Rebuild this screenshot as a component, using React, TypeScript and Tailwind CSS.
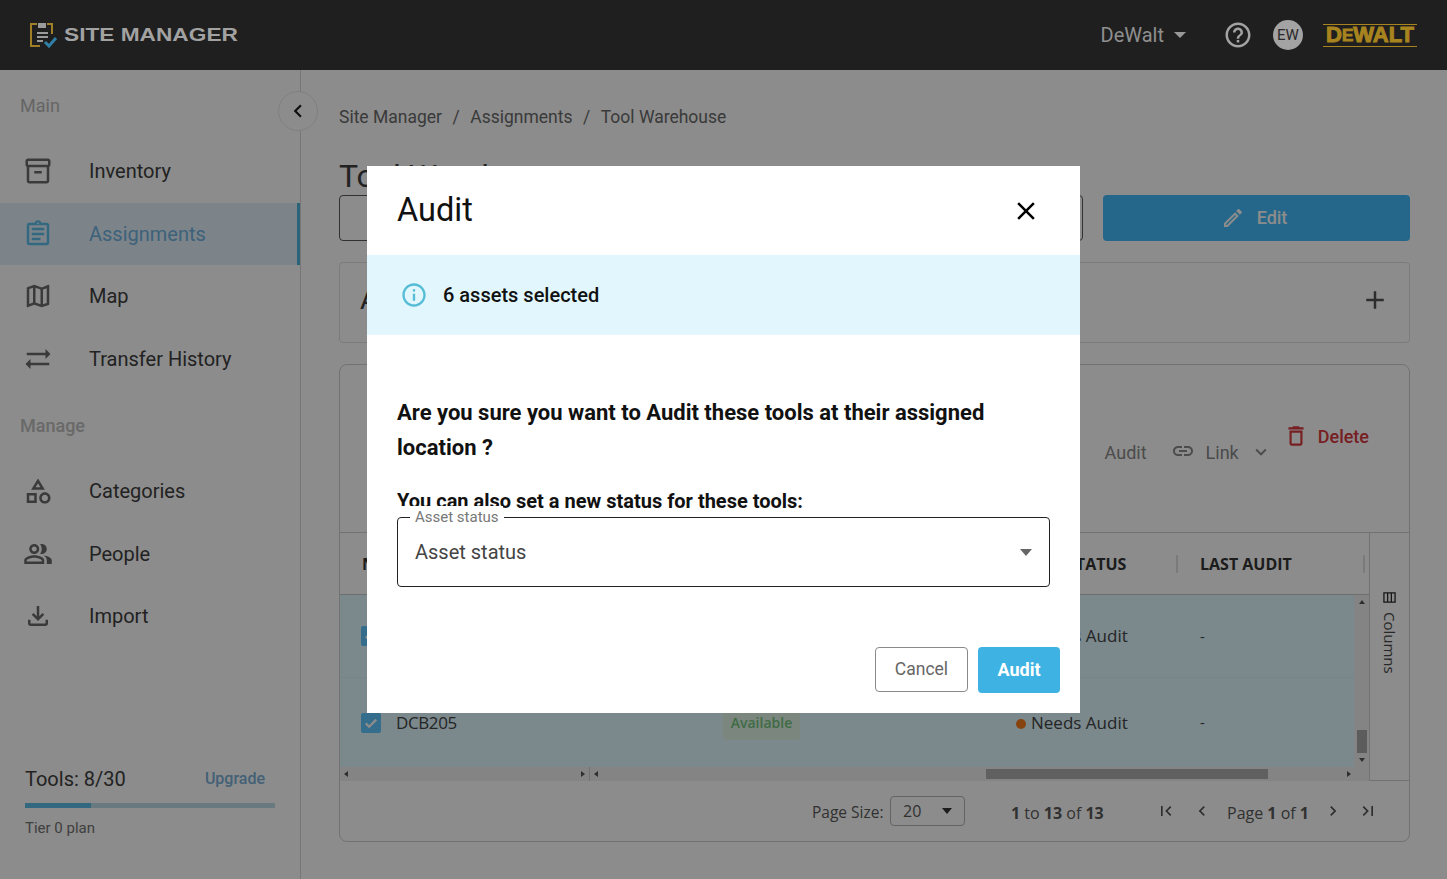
import React from "react";

const paths = {
  inventory: "M20 2H4c-1 0-2 .9-2 2v3.01c0 .72.43 1.34 1 1.69V20c0 1.1 1.1 2 2 2h14c.9 0 2-.9 2-2V8.7c.57-.35 1-.97 1-1.69V4c0-1.1-1-2-2-2zm-1 18H5V9h14v11zm1-13H4V4h16v3zM9 12h6v2H9z",
  assignment: "M7 15h7v2H7zm0-4h10v2H7zm0-4h10v2H7zm12-4h-4.18C14.4 1.84 13.3 1 12 1c-1.3 0-2.4.84-2.82 2H5c-.14 0-.27.01-.4.04-.39.08-.74.28-1.01.55-.18.18-.33.4-.43.64-.1.23-.16.49-.16.77v14c0 .27.06.54.16.78s.25.45.43.64c.27.27.62.47 1.01.55.13.02.26.03.4.03h14c1.1 0 2-.9 2-2V5c0-1.1-.9-2-2-2zm-7-.25c.41 0 .75.34.75.75s-.34.75-.75.75-.75-.34-.75-.75.34-.75.75-.75zM19 19H5V5h14v14z",
  map: "M20.5 3l-.16.03L15 5.1 9 3 3.36 4.9c-.21.07-.36.25-.36.48V20.5c0 .28.22.5.5.5l.16-.03L9 18.9l6 2.1 5.64-1.9c.21-.07.36-.25.36-.48V3.5c0-.28-.22-.5-.5-.5zM10 5.47l4 1.4v11.66l-4-1.4V5.47zm-5 .99l3-1.01v11.7l-3 1.16V6.46zm14 11.08l-3 1.01V6.86l3-1.16v11.84z",
  transfer: "M22 8l-4-4v3H3v2h15v3l4-4zM2 16l4 4v-3h15v-2H6v-3l-4 4z",
  category: "M12 2l-5.5 9h11L12 2zm0 3.84L13.93 9h-3.87L12 5.84zM17.5 13c-2.49 0-4.5 2.01-4.5 4.5s2.01 4.5 4.5 4.5 4.5-2.01 4.5-4.5-2.01-4.5-4.5-4.5zm0 7c-1.38 0-2.5-1.12-2.5-2.5s1.12-2.5 2.5-2.5 2.5 1.12 2.5 2.5-1.12 2.5-2.5 2.5zM3 21.5h8v-8H3v8zm2-6h4v4H5v-4z",
  people: "M16.67 13.13C18.04 14.06 19 15.32 19 17v3h4v-3c0-2.18-3.57-3.47-6.33-3.87zM15 12c2.21 0 4-1.79 4-4s-1.79-4-4-4c-.47 0-.91.1-1.33.24C14.5 5.27 15 6.58 15 8s-.5 2.73-1.33 3.76c.42.14.86.24 1.33.24zM9 12c2.21 0 4-1.79 4-4s-1.79-4-4-4-4 1.79-4 4 1.79 4 4 4zm0-6c1.1 0 2 .9 2 2s-.9 2-2 2-2-.9-2-2 .9-2 2-2zM9 13c-2.67 0-8 1.34-8 4v3h16v-3c0-2.66-5.33-4-8-4zm6 5H3v-.99C3.2 16.29 6.3 15 9 15s5.8 1.29 6 2v1z",
  download: "M18 15v3H6v-3H4v3c0 1.1.9 2 2 2h12c1.1 0 2-.9 2-2v-3h-2zm-1-4l-1.41-1.41L13 12.17V4h-2v8.17L8.41 9.59 7 11l5 5 5-5z",
  help: "M11 18h2v-2h-2v2zm1-16C6.48 2 2 6.48 2 12s4.48 10 10 10 10-4.48 10-10S17.52 2 12 2zm0 18c-4.41 0-8-3.59-8-8s3.59-8 8-8 8 3.59 8 8-3.59 8-8 8zm0-14c-2.21 0-4 1.79-4 4h2c0-1.1.9-2 2-2s2 .9 2 2c0 2-3 1.75-3 5h2c0-2.25 3-2.5 3-5 0-2.21-1.79-4-4-4z",
  info: "M11 7h2v2h-2zm0 4h2v6h-2zm1-9C6.48 2 2 6.48 2 12s4.48 10 10 10 10-4.48 10-10S17.52 2 12 2zm0 18c-4.41 0-8-3.59-8-8s3.59-8 8-8 8 3.59 8 8-3.59 8-8 8z",
  close: "M19 6.41 17.59 5 12 10.59 6.41 5 5 6.41 10.59 12 5 17.59 6.41 19 12 13.41 17.59 19 19 17.59 13.41 12z",
  edit: "M3 17.25V21h3.75L17.81 9.94l-3.75-3.75L3 17.25zM5.92 19H5v-.92l9.06-9.06.92.92L5.92 19zM20.71 5.63l-2.34-2.34c-.2-.2-.45-.29-.71-.29s-.51.1-.7.29l-1.83 1.83 3.75 3.75 1.83-1.83c.39-.39.39-1.02 0-1.41z",
  trash: "M16 9v10H8V9h8m-1.5-6h-5l-1 1H5v2h14V4h-3.5l-1-1zM18 7H6v12c0 1.1.9 2 2 2h8c1.1 0 2-.9 2-2V7z",
  link: "M3.9 12c0-1.71 1.39-3.1 3.1-3.1h4V7H7c-2.76 0-5 2.24-5 5s2.24 5 5 5h4v-1.9H7c-1.71 0-3.1-1.39-3.1-3.1zM8 13h8v-2H8v2zm9-6h-4v1.9h4c1.71 0 3.1 1.39 3.1 3.1s-1.39 3.1-3.1 3.1h-4V17h4c2.76 0 5-2.24 5-5s-2.24-5-5-5z",
  plus: "M19 13h-6v6h-2v-6H5v-2h6V5h2v6h6v2z",
  chevronLeft: "M15.41 7.41 14 6l-6 6 6 6 1.41-1.41L10.83 12z",
  chevronRight: "M8.59 16.59 10 18l6-6-6-6-1.41 1.41L13.17 12z",
  chevronDown: "M7.41 8.59 12 13.17l4.59-4.58L18 10l-6 6-6-6z",
  first: "M18.41 16.59 13.82 12l4.59-4.59L17 6l-6 6 6 6zM6 6h2v12H6z",
  last: "M5.59 7.41 10.18 12l-4.59 4.59L7 18l6-6-6-6zM16 6h2v12h-2z",
};

function Icon({ d, className }: { d: string; className?: string }) {
  return (
    <svg viewBox="0 0 24 24" fill="currentColor" className={className}>
      <path d={d} />
    </svg>
  );
}

const mainNav = [
  { label: "Inventory", icon: paths.inventory },
  { label: "Assignments", icon: paths.assignment, active: true },
  { label: "Map", icon: paths.map },
  { label: "Transfer History", icon: paths.transfer },
];

const manageNav = [
  { label: "Categories", icon: paths.category },
  { label: "People", icon: paths.people },
  { label: "Import", icon: paths.download },
];

function NavItem({ label, icon, active }: { label: string; icon: string; active?: boolean }) {
  return (
    <div
      className={`flex h-[62.5px] items-center pl-[23px] text-[20px] ${
        active ? "border-r-[3px] border-[#4fb5e0] bg-[#e2f1fb] text-[#6fb2de]" : "text-[#3e3e3e]"
      }`}
    >
      <Icon d={icon} className={`h-[30px] w-[30px] ${active ? "text-[#5cc0ea]" : "text-[#6a6a6a]"}`} />
      <span className="ml-[36px]">{label}</span>
    </div>
  );
}

function Sidebar() {
  return (
    <aside className="flex w-[301px] shrink-0 flex-col border-r border-[#d8d8d8]">
      <div className="pl-[20px] pt-[24px] text-[18px] leading-[24px] text-[#b9b9b9]">Main</div>
      <nav className="mt-[22px]">
        {mainNav.map((item) => (
          <NavItem key={item.label} {...item} />
        ))}
      </nav>
      <div className="pl-[20px] pt-[24px] text-[18px] font-medium leading-[24px] text-[#c0c0c0]">Manage</div>
      <nav className="mt-[22px]">
        {manageNav.map((item) => (
          <NavItem key={item.label} {...item} />
        ))}
      </nav>
      <div className="mt-auto px-[25px] pb-[41px]">
        <div className="flex items-center justify-between pr-[10px]">
          <span className="text-[20px] leading-[24px] text-[#3e3e3e]">Tools: 8/30</span>
          <span className="text-[16px] font-medium text-[#7ab0d8]">Upgrade</span>
        </div>
        <div className="mt-[12px] h-[5px] w-[250px] bg-[#c0dcea]">
          <div className="h-full w-[66px] bg-[#5cc0ea]" />
        </div>
        <div className="mt-[10px] text-[15px] leading-[20px] text-[#747474]">Tier 0 plan</div>
      </div>
    </aside>
  );
}

function Header() {
  return (
    <header className="relative z-20 flex h-[70px] shrink-0 items-center bg-[#1f1f1f] pl-[30px] pr-[30px]">
      <svg viewBox="0 0 28 26" className="h-[26px] w-[28px]">
        <path d="M7 2H1v22h9M17 2h5v10" fill="none" stroke="#a07f26" strokeWidth="2" />
        <path d="M8 1h8v5H8zM7 10h11v2H7zM7 14h11v2H7zM7 18h6v2H7z" fill="#9b9b9b" />
        <path d="M15 20l4 4 7-8" fill="none" stroke="#2f7fa6" strokeWidth="3" />
      </svg>
      <span className="ml-[6px] inline-block w-[174px] origin-left scale-x-[1.26] whitespace-nowrap font-['Liberation_Sans',sans-serif] text-[18px] font-bold leading-none text-[#a2a2a2]">
        SITE MANAGER
      </span>
      <div className="ml-auto flex items-center">
        <span className="text-[20px] text-[#8f8f8f]">DeWalt</span>
        <span className="ml-[10px] h-0 w-0 border-x-[6px] border-t-[6px] border-x-transparent border-t-[#999999]" />
        <Icon d={paths.help} className="ml-[37px] h-[30px] w-[30px] text-[#a3a3a3]" />
        <span className="ml-[20px] flex h-[30px] w-[30px] items-center justify-center rounded-full bg-[#a3a3a3] text-[15px] text-[#2a2a2a]">
          EW
        </span>
        <span className="ml-[20px] flex h-[23px] w-[94px] items-center justify-center overflow-hidden border-y border-[#a8841f] font-['Liberation_Sans',sans-serif] text-[22px] font-bold leading-none text-[#a8841f] [-webkit-text-stroke:1px_#a8841f]">
          D<span className="text-[17px]">E</span>WALT
        </span>
      </div>
    </header>
  );
}

function Checkbox() {
  return (
    <span className="flex h-[20px] w-[20px] items-center justify-center rounded-[2px] bg-[#62c8ff]">
      <svg viewBox="0 0 24 24" className="h-[18px] w-[18px]" fill="none" stroke="#ffffff" strokeWidth="3">
        <path d="M5 12.5l4.5 4.5L19 7.5" />
      </svg>
    </span>
  );
}

function TableRow({ tall }: { tall?: boolean }) {
  return (
    <div className={`flex items-center font-['Open_Sans',sans-serif] text-[#444444] ${tall ? "h-[89px]" : "h-[83px] border-b border-[#d8f2f8]"}`}>
      <div className="flex w-[250px] items-center pl-[21px]">
        <Checkbox />
        <span className="ml-[15px] text-[17px] tracking-[-0.4px]">DCB205</span>
      </div>
      <div className="w-[133px]" />
      <div className="w-[293px]">
        <span className="inline-flex h-[35px] w-[77px] items-center justify-center rounded-[3px] bg-[#dff5e6] text-[14px] font-semibold text-[#74c47e]">
          Available
        </span>
      </div>
      <div className="flex w-[184px] items-center text-[17px]">
        <span className="mr-[5px] mt-[2px] h-[10px] w-[10px] rounded-full bg-[#f57c20]" />
        Needs Audit
      </div>
      <div className="text-[15px]">-</div>
    </div>
  );
}

function ScrollArrow({ dir }: { dir: "left" | "right" | "up" | "down" }) {
  const cls = {
    left: "border-y-[3px] border-r-[4px] border-y-transparent border-r-[#555555]",
    right: "border-y-[3px] border-l-[4px] border-y-transparent border-l-[#555555]",
    up: "border-x-[3px] border-b-[4px] border-x-transparent border-b-[#555555]",
    down: "border-x-[3px] border-t-[4px] border-x-transparent border-t-[#555555]",
  }[dir];
  return <span className={`h-0 w-0 ${cls}`} />;
}

function Table() {
  return (
    <div className="flex h-[248px] border-b border-[#d0d0d0]">
      <div className="flex w-[1030px] flex-col border-r border-[#cfcfcf]">
        <div className="flex h-[62px] shrink-0 items-center border-b border-[#c8c8c8] font-['Open_Sans',sans-serif] text-[16px] font-bold text-[#333333]">
          <span className="w-[250px] pl-[22px]">NAME</span>
          <span className="w-[133px]" />
          <span className="w-[293px]">STATUS</span>
          <span className="w-[160px] whitespace-nowrap">ASSET STATUS</span>
          <span className="h-[18px] w-[2px] bg-[#e0e0e0]" />
          <span className="w-[185px] pl-[22px]">LAST AUDIT</span>
          <span className="h-[18px] w-[2px] bg-[#e0e0e0]" />
        </div>
        <div className="flex h-[172px] shrink-0">
          <div className="flex-1 bg-[#e0f8ff]">
            <TableRow />
            <TableRow tall />
          </div>
          <div className="flex w-[15px] flex-col items-center justify-between bg-[#f1f1f1] py-[5px]">
            <ScrollArrow dir="up" />
            <span className="mb-[5px] mt-auto h-[23px] w-[10px] bg-[#a8a8a8]" />
            <ScrollArrow dir="down" />
          </div>
        </div>
        <div className="flex h-[14px] shrink-0 bg-[#f1f1f1]">
          <div className="flex w-[250px] items-center justify-between border-r border-[#cfcfcf] px-[4px]">
            <ScrollArrow dir="left" />
            <ScrollArrow dir="right" />
          </div>
          <div className="flex w-[765px] items-center px-[4px]">
            <ScrollArrow dir="left" />
            <span className="ml-[388px] h-[10px] w-[282px] bg-[#b0b0b0]" />
            <span className="flex-1" />
            <ScrollArrow dir="right" />
          </div>
        </div>
      </div>
      <div className="flex flex-1 flex-col items-center pt-[58px] font-['Open_Sans',sans-serif]">
        <svg viewBox="0 0 14 14" className="h-[13px] w-[13px] text-[#2a2a2a]" fill="none" stroke="currentColor" strokeWidth="1.4">
          <path d="M1 2h12v10H1zM5 2v10M9 2v10" />
        </svg>
        <span className="mt-[8px] text-[15px] leading-[20px] text-[#4a4a4a] [writing-mode:vertical-rl]">Columns</span>
      </div>
    </div>
  );
}

function Pager() {
  return (
    <div className="flex h-[60px] items-center pt-[3px] font-['Open_Sans',sans-serif] text-[16px] text-[#5a5a5a]">
      <span className="ml-[472px] w-[71px] whitespace-nowrap text-[15.5px]">Page Size:</span>
      <span className="-mt-[3px] ml-[7px] flex h-[30px] w-[75px] items-center justify-between rounded-[4px] border border-[#b4b4b4] px-[12px] text-[16px]">
        20
        <span className="h-0 w-0 border-x-[5px] border-t-[6px] border-x-transparent border-t-[#333333]" />
      </span>
      <span className="ml-[46px] w-[93px] whitespace-nowrap">
        <b>1</b> to <b>13</b> of <b>13</b>
      </span>
      <Icon d={paths.first} className="-mt-[3px] ml-[52px] h-[20px] w-[20px] text-[#555555]" />
      <Icon d={paths.chevronLeft} className="-mt-[3px] ml-[16px] h-[20px] w-[20px] text-[#555555]" />
      <span className="ml-[15px] w-[82px] whitespace-nowrap">
        Page <b>1</b> of <b>1</b>
      </span>
      <Icon d={paths.chevronRight} className="-mt-[3px] ml-[14px] h-[20px] w-[20px] text-[#555555]" />
      <Icon d={paths.last} className="-mt-[3px] ml-[15px] h-[20px] w-[20px] text-[#555555]" />
    </div>
  );
}

function Main() {
  return (
    <main className="flex min-w-0 flex-1 flex-col pl-[38px] pr-[37px]">
      <div className="mt-[35px] flex h-[24px] items-center gap-[10.5px] text-[17.5px] text-[#6b6b6b]">
        <span>Site Manager</span>
        <span>/</span>
        <span>Assignments</span>
        <span>/</span>
        <span>Tool Warehouse</span>
      </div>
      <h1 className="mt-[23px] h-[43px] text-[32px] font-normal leading-[48px] text-[#3e3e3e]">Tool Warehouse</h1>
      <div className="flex gap-[20px]">
        <div className="h-[46px] w-[744px] rounded-[4px] border border-[#5a5a5a] bg-white" />
        <div className="flex h-[46px] flex-1 items-center justify-center gap-[12px] rounded-[4px] bg-[#42bcfb] pb-[1px] pr-[5px] text-[18px] font-medium text-white">
          <Icon d={paths.edit} className="h-[24px] w-[24px] text-white" />
          Edit
        </div>
      </div>
      <div className="mt-[21px] flex h-[81px] items-center justify-between rounded-[4px] border border-[#e0e0e0] pb-[6px] pl-[20px] pr-[19px]">
        <span className="text-[28px] text-[#3e3e3e]">Assets</span>
        <Icon d={paths.plus} className="h-[30px] w-[30px] text-[#555555]" />
      </div>
      <div className="mt-[21px] h-[478px] overflow-hidden rounded-[8px] border border-[#cfcfcf]">
        <div className="flex h-[168px] items-start justify-end border-b border-[#cfcfcf] pr-[40px] text-[18px] text-[#8a8a8a]">
          <span className="mt-[74px]">Audit</span>
          <Icon d={paths.link} className="ml-[24px] mt-[74px] h-[24px] w-[24px]" />
          <span className="ml-[11px] mt-[74px]">Link</span>
          <Icon d={paths.chevronDown} className="ml-[11px] mt-[76px] h-[22px] w-[22px]" />
          <Icon d={paths.trash} className="ml-[11px] mt-[58px] h-[26px] w-[26px] text-[#d93a3f]" />
          <span className="ml-[9px] mt-[58px] font-medium text-[#d93a3f]">Delete</span>
        </div>
        <Table />
        <Pager />
      </div>
    </main>
  );
}

function AuditDialog() {
  return (
    <div className="absolute inset-0 z-10 flex justify-center bg-black/45 pt-[166px]">
      <div className="h-[547px] w-[713px] bg-white">
        <div className="flex h-[89px] items-center justify-between pl-[30px] pr-[39px]">
          <span className="text-[32.5px] leading-none text-[#111111]">Audit</span>
          <Icon d={paths.close} className="h-[30px] w-[30px] text-black" />
        </div>
        <div className="flex h-[80px] items-center bg-[#e1f7fd] pl-[33px] text-[20px] font-medium text-[#111111]">
          <Icon d={paths.info} className="h-[28px] w-[28px] text-[#55bcd6]" />
          <span className="ml-[15px]">6 assets selected</span>
        </div>
        <div className="px-[30px] pt-[60px]">
          <p className="text-[22px] font-bold leading-[35px] text-[#111111]">
            Are you sure you want to Audit these tools at their assigned location ?
          </p>
          <p className="mt-[24px] text-[20px] font-bold leading-[24px] text-[#111111]">
            You can also set a new status for these tools:
          </p>
          <div className="relative mt-[4px] flex h-[70px] items-center justify-between rounded-[4px] border border-[#222222] pl-[17px] pr-[17px] text-[20px] text-[#444444]">
            {/* white strip cuts the line of text above, as in the real form */}
            <span className="absolute -left-px -top-[12px] h-[11px] w-[106px] bg-white" />
            <span className="absolute -top-[9px] left-[12px] bg-white px-[5px] text-[15px] leading-[16px] text-[#777777]">
              Asset status
            </span>
            Asset status
            <span className="h-0 w-0 border-x-[6px] border-t-[7px] border-x-transparent border-t-[#666666]" />
          </div>
        </div>
        <div className="mt-[60px] flex justify-end gap-[10px] pr-[20px]">
          <div className="flex h-[45px] w-[93px] items-center justify-center rounded-[4px] border border-[#8a8a8a] text-[17.5px] text-[#666666]">
            Cancel
          </div>
          <div className="flex h-[46px] w-[82px] items-center justify-center rounded-[4px] bg-[#3db2e3] pb-[1px] text-[18px] font-bold text-white">
            Audit
          </div>
        </div>
      </div>
    </div>
  );
}

export default function App() {
  return (
    <div className="relative flex h-[879px] w-[1447px] flex-col overflow-hidden bg-white font-[Roboto,sans-serif]">
      <Header />
      <div className="flex min-h-0 flex-1">
        <Sidebar />
        <Main />
      </div>
      <button className="absolute left-[278px] top-[91px] flex h-[40px] w-[40px] items-center justify-center rounded-full border border-[#e8e8e8] bg-white">
        <Icon d={paths.chevronLeft} className="h-[26px] w-[26px] text-[#1c1c1c]" />
      </button>
      <AuditDialog />
    </div>
  );
}
